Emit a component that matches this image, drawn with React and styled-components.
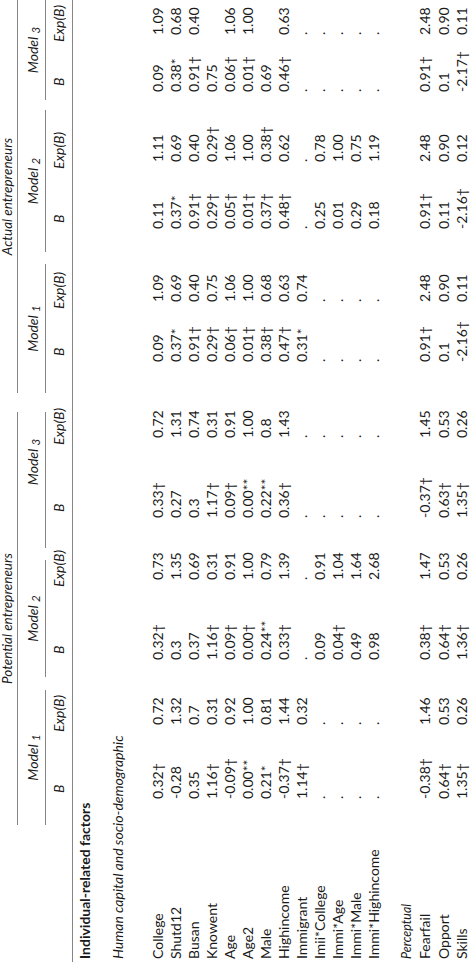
import styled, { createGlobalStyle } from "styled-components";

const GlobalStyle = createGlobalStyle`
  html, body {
    margin: 0;
    padding: 0;
    background: #fff;
  }
  body {
    overflow: hidden;
  }
`;

// label column + B / Exp(B) pairs for the six models (the table is printed sideways)
const COLUMNS =
  "137px 93px 55px 90px 39px 103px 52px 84px 57px 83px 69px 58px 42px";

const models = [
  { n: "1", gap: 13, bPad: 26, shift: 0 },
  { n: "2", gap: 12, bPad: 17, shift: 0 },
  { n: "3", gap: 19, bPad: 30, shift: 36 },
  { n: "1", gap: 12, bPad: 31, shift: 0 },
  { n: "2", gap: 10, bPad: 23, shift: 0 },
  { n: "3", gap: 0, bPad: 8, shift: 0 },
];

const block1 = [
  ["College", ["0.32†", "0.72", "0.32†", "0.73", "0.33†", "0.72", "0.09", "1.09", "0.11", "1.11", "0.09", "1.09"]],
  ["Shutd12", ["-0.28", "1.32", "0.3", "1.35", "0.27", "1.31", "0.37*", "0.69", "0.37*", "0.69", "0.38*", "0.68"]],
  ["Busan", ["0.35", "0.7", "0.37", "0.69", "0.3", "0.74", "0.91†", "0.40", "0.91†", "0.40", "0.91†", "0.40"]],
  ["Knowent", ["1.16†", "0.31", "1.16†", "0.31", "1.17†", "0.31", "0.29†", "0.75", "0.29†", "0.29†", "0.75", ""]],
  ["Age", ["-0.09†", "0.92", "0.09†", "0.91", "0.09†", "0.91", "0.06†", "1.06", "0.05†", "1.06", "0.06†", "1.06"]],
  ["Age2", ["0.00**", "1.00", "0.00†", "1.00", "0.00**", "1.00", "0.01†", "1.00", "0.01†", "1.00", "0.01†", "1.00"]],
  ["Male", ["0.21*", "0.81", "0.24**", "0.79", "0.22**", "0.8", "0.38†", "0.68", "0.37†", "0.38†", "0.69", ""]],
  ["Highincome", ["-0.37†", "1.44", "0.33†", "1.39", "0.36†", "1.43", "0.47†", "0.63", "0.48†", "0.62", "0.46†", "0.63"]],
  ["Immigrant", ["1.14†", "0.32", ".", ".", ".", ".", "0.31*", "0.74", ".", ".", ".", "."]],
  ["Imii*College", [".", ".", "0.09", "0.91", ".", ".", ".", ".", "0.25", "0.78", ".", "."]],
  ["Immi*Age", [".", ".", "0.04†", "1.04", ".", ".", ".", ".", "0.01", "1.00", ".", "."]],
  ["Immi*Male", [".", ".", "0.49", "1.64", ".", ".", ".", ".", "0.29", "0.75", ".", "."]],
  ["Immi*Highincome", [".", ".", "0.98", "2.68", ".", ".", ".", ".", "0.18", "1.19", ".", "."]],
];

const block2 = [
  ["Fearfail", ["-0.38†", "1.46", "0.38†", "1.47", "-0.37†", "1.45", "0.91†", "2.48", "0.91†", "2.48", "0.91†", "2.48"]],
  ["Opport", ["0.64†", "0.53", "0.64†", "0.53", "0.63†", "0.53", "0.1", "0.90", "0.11", "0.90", "0.1", "0.90"]],
  ["Skills", ["1.35†", "0.26", "1.36†", "0.26", "1.35†", "0.26", "-2.16†", "0.11", "-2.16†", "0.12", "-2.17†", "0.11"]],
];

const Page = styled.div`
  width: 474px;
  height: 962px;
  overflow: hidden;
  background: #fff;
`;

const Sheet = styled.div`
  width: 962px;
  height: 474px;
  transform-origin: top left;
  transform: translateY(962px) rotate(-90deg);
  font-family: Lato, "Open Sans", sans-serif;
  font-size: 14px;
  color: #1a1a1a;
`;

const Head = styled.div`
  display: grid;
  grid-template-columns: ${COLUMNS};
  grid-template-rows: 18px 28px 26px;
  border-bottom: 1px solid #858585;
`;

const GroupCell = styled.div`
  grid-row: 1;
  grid-column: ${(p) => p.$start} / span 6;
  margin-right: ${(p) => p.$gap}px;
  border-bottom: 1px solid #858585;
  text-align: center;
  font-style: italic;
  font-size: 13.5px;
  line-height: 14px;
  white-space: nowrap;
`;

const ModelCell = styled.div`
  grid-row: 2;
  grid-column: ${(p) => p.$start} / span 2;
  margin-right: ${(p) => p.$gap}px;
  padding-top: 7px;
  padding-left: ${(p) => p.$shift}px;
  border-bottom: 1px solid #858585;
  text-align: center;
  font-style: italic;
  line-height: 15px;
  white-space: nowrap;
`;

const Num = styled.span`
  font-size: 11.5px;
  position: relative;
  top: 2px;
`;

const ColHead = styled.div`
  grid-row: 3;
  grid-column: ${(p) => p.$col};
  padding-top: 5px;
  padding-left: ${(p) => p.$pad}px;
  font-style: italic;
  line-height: 15px;
  white-space: nowrap;
`;

const Body = styled.div`
  display: flex;
  flex-direction: column;
`;

const SectionTitle = styled.div`
  margin-top: 3px;
  padding-left: 3px;
  font-weight: 700;
  line-height: 18px;
`;

const SubTitle = styled.div`
  margin-top: ${(p) => p.$gap}px;
  margin-bottom: ${(p) => p.$after}px;
  padding-left: 3px;
  font-style: italic;
  font-size: ${(p) => p.$size}px;
  line-height: 18px;
`;

const Row = styled.div`
  display: grid;
  grid-template-columns: ${COLUMNS};
  height: ${(p) => p.$pitch}px;
  line-height: 18px;
  white-space: nowrap;
`;

const Label = styled.div`
  padding-left: 3px;
`;

const Value = styled.div`
  padding-left: ${(p) => p.$pad}px;
`;

const valuePads = models.flatMap((m) => [m.bPad, 7]);

const DataRow = ({ label, values, pitch }) => (
  <Row $pitch={pitch}>
    <Label>{label}</Label>
    {values.map((v, i) => (
      <Value key={i} $pad={valuePads[i]}>
        {v}
      </Value>
    ))}
  </Row>
);

const App = () => {
  return (
    <Page>
      <GlobalStyle />
      <Sheet>
        <Head>
          <GroupCell $start={2} $gap={19}>
            Potential entrepreneurs
          </GroupCell>
          <GroupCell $start={8} $gap={0}>
            Actual entrepreneurs
          </GroupCell>
          {models.map((m, i) => (
            <ModelCell key={i} $start={2 + i * 2} $gap={m.gap} $shift={m.shift}>
              Model <Num>{m.n}</Num>
            </ModelCell>
          ))}
          {models.map((m, i) => [
            <ColHead key={"b" + i} $col={2 + i * 2} $pad={m.bPad + 6}>
              B
            </ColHead>,
            <ColHead key={"e" + i} $col={3 + i * 2} $pad={0}>
              Exp(B)
            </ColHead>,
          ])}
        </Head>
        <Body>
          <SectionTitle>Individual-related factors</SectionTitle>
          <SubTitle $gap={15} $after={22} $size={14}>
            Human capital and socio-demographic
          </SubTitle>
          {block1.map(([label, values]) => (
            <DataRow key={label} label={label} values={values} pitch={18} />
          ))}
          <SubTitle $gap={15} $after={0} $size={12.5}>
            Perceptual
          </SubTitle>
          {block2.map(([label, values]) => (
            <DataRow key={label} label={label} values={values} pitch={18.5} />
          ))}
        </Body>
      </Sheet>
    </Page>
  );
};

export default App;
